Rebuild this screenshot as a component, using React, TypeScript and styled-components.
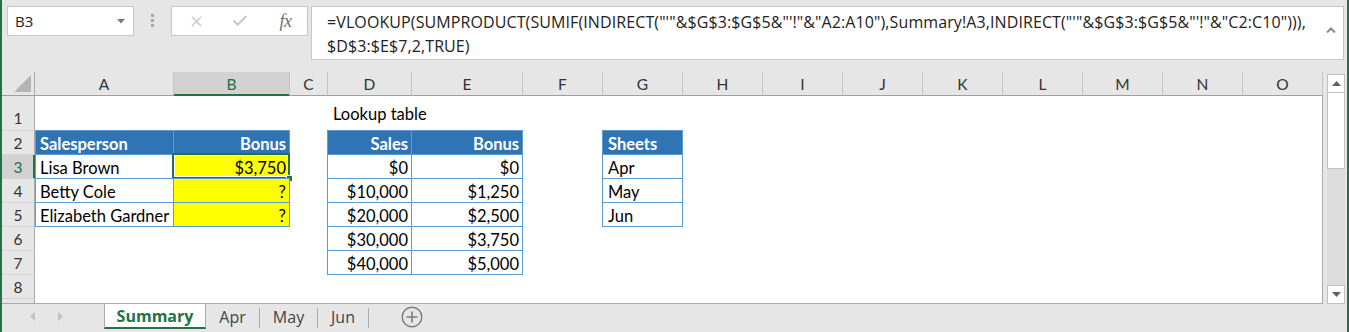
import styled, { createGlobalStyle, css } from "styled-components";
import { Check, X } from "lucide-react";

const GREEN = "#217346";
const BLUE_FILL = "#2f75b5";
const BLUE_LINE = "#5b9bd5";

const GlobalStyle = createGlobalStyle`
  html, body {
    margin: 0;
    padding: 0;
    background: #e6e6e6;
    overflow: hidden;
  }
`;

type Kind = "head" | "body" | "fill" | "plain";
type CellData = { text: string; kind: Kind; align?: "left" | "right"; selected?: boolean };
type RowData = { n: number; height: number; cells: Record<string, CellData> };

const COLUMNS = [
  { id: "A", width: 139 },
  { id: "B", width: 116 },
  { id: "C", width: 38 },
  { id: "D", width: 84 },
  { id: "E", width: 111 },
  { id: "F", width: 80 },
  ..."GHIJKLMNO".split("").map((id) => ({ id, width: 80 })),
];

const head = (text: string, align: "left" | "right" = "right"): CellData => ({ text, kind: "head", align });
const body = (text: string, align: "left" | "right" = "right"): CellData => ({ text, kind: "body", align });
const fill = (text: string, selected = false): CellData => ({ text, kind: "fill", align: "right", selected });

// row 9 only peeks out below row 8, so its number is not drawn
const ROWS: RowData[] = [
  { n: 1, height: 35, cells: { D: { text: "Lookup table", kind: "plain", align: "left" } } },
  {
    n: 2,
    height: 24,
    cells: { A: head("Salesperson", "left"), B: head("Bonus"), D: head("Sales"), E: head("Bonus"), G: head("Sheets", "left") },
  },
  {
    n: 3,
    height: 24,
    cells: { A: body("Lisa Brown", "left"), B: fill("$3,750", true), D: body("$0"), E: body("$0"), G: body("Apr", "left") },
  },
  {
    n: 4,
    height: 24,
    cells: { A: body("Betty Cole", "left"), B: fill("?"), D: body("$10,000"), E: body("$1,250"), G: body("May", "left") },
  },
  {
    n: 5,
    height: 24,
    cells: { A: body("Elizabeth Gardner", "left"), B: fill("?"), D: body("$20,000"), E: body("$2,500"), G: body("Jun", "left") },
  },
  { n: 6, height: 24, cells: { D: body("$30,000"), E: body("$3,750") } },
  { n: 7, height: 24, cells: { D: body("$40,000"), E: body("$5,000") } },
  { n: 8, height: 24, cells: {} },
  { n: 9, height: 24, cells: {} },
];

const FORMULA_LINE_1 =
  '=VLOOKUP(SUMPRODUCT(SUMIF(INDIRECT("\'"&$G$3:$G$5&"\'!"&"A2:A10"),Summary!A3,INDIRECT("\'"&$G$3:$G$5&"\'!"&"C2:C10"))),';
const FORMULA_LINE_2 = "$D$3:$E$7,2,TRUE)";

export default function App() {
  return (
    <>
      <GlobalStyle />
      <Window>
        <FormulaBar>
          <NameBox>
            <span>B3</span>
            <svg width="8" height="5" viewBox="0 0 8 5">
              <path d="M0 0 L8 0 L4 4.5 Z" fill="#7a7a7a" />
            </svg>
          </NameBox>
          <Grip>
            <Dot />
            <Dot />
            <Dot />
          </Grip>
          <ActionBox>
            <ActionSlot>
              <X size={17} color="#c4c4c4" strokeWidth={1.8} />
            </ActionSlot>
            <ActionSlot>
              <Check size={18} color="#c4c4c4" strokeWidth={2.4} />
            </ActionSlot>
            <ActionSlot>
              <Fx>fx</Fx>
            </ActionSlot>
          </ActionBox>
          <FormulaBox>
            <FormulaText>
              <div>{FORMULA_LINE_1}</div>
              <div>{FORMULA_LINE_2}</div>
            </FormulaText>
            <Collapse>
              <svg width="10" height="6" viewBox="0 0 10 6">
                <path d="M1 5.5 L5 1.5 L9 5.5" fill="none" stroke="#8a8a8a" strokeWidth="2" />
              </svg>
            </Collapse>
          </FormulaBox>
        </FormulaBar>

        <Main>
          <Sheet
            $columns={`33px ${COLUMNS.map((c) => `${c.width}px`).join(" ")}`}
            $rows={`24px ${ROWS.map((r) => `${r.height}px`).join(" ")}`}
          >
            <Corner>
              <svg width="17" height="17" viewBox="0 0 17 17">
                <path d="M17 0 L17 17 L0 17 Z" fill="#b4b4b4" />
              </svg>
            </Corner>
            {COLUMNS.map((c) => (
              <ColHeader key={c.id} $selected={c.id === "B"}>
                {c.id}
              </ColHeader>
            ))}
            {ROWS.map((row) => [
              <RowHeader key={`h${row.n}`} $selected={row.n === 3} $tall={row.height > 24}>
                {row.n < 9 ? row.n : ""}
              </RowHeader>,
              ...COLUMNS.map((c) => {
                const cell = row.cells[c.id];
                if (!cell) return <Cell key={`${c.id}${row.n}`} $kind="plain" />;
                return (
                  <Cell key={`${c.id}${row.n}`} $kind={cell.kind} $align={cell.align} $first={c.id === "A"}>
                    {cell.text}
                    {cell.selected && (
                      <Selection>
                        <Handle />
                      </Selection>
                    )}
                  </Cell>
                );
              }),
            ])}
          </Sheet>
          <ScrollBar>
            <ScrollButton>
              <svg width="9" height="5" viewBox="0 0 9 5">
                <path d="M0 5 L9 5 L4.5 0 Z" fill="#606060" />
              </svg>
            </ScrollButton>
            <Thumb />
            <Track />
            <ScrollButton>
              <svg width="9" height="5" viewBox="0 0 9 5">
                <path d="M0 0 L9 0 L4.5 5 Z" fill="#606060" />
              </svg>
            </ScrollButton>
          </ScrollBar>
        </Main>

        <TabBar>
          <NavArrows>
            <svg width="5" height="9" viewBox="0 0 5 9">
              <path d="M5 0 L5 9 L0 4.5 Z" fill="#c2c2c2" />
            </svg>
            <svg width="5" height="9" viewBox="0 0 5 9">
              <path d="M0 0 L0 9 L5 4.5 Z" fill="#c2c2c2" />
            </svg>
          </NavArrows>
          <Tab $active $width={102}>Summary</Tab>
          <Tab $width={53}>Apr</Tab>
          <TabDivider />
          <Tab $width={57}>May</Tab>
          <TabDivider />
          <Tab $width={50}>Jun</Tab>
          <TabDivider />
          <AddSheet>
            <svg width="22" height="22" viewBox="0 0 22 22">
              <circle cx="11" cy="11" r="9.8" fill="none" stroke="#7d7d7d" strokeWidth="1.4" />
              <path d="M11 5.5 V16.5 M5.5 11 H16.5" stroke="#7d7d7d" strokeWidth="1.6" />
            </svg>
          </AddSheet>
        </TabBar>
      </Window>
    </>
  );
}

const Window = styled.div`
  width: 1349px;
  height: 332px;
  box-sizing: border-box;
  border-left: 2px solid ${GREEN};
  border-right: 2px solid ${GREEN};
  background: #e6e6e6;
  display: flex;
  flex-direction: column;
  overflow: hidden;
`;

const FormulaBar = styled.div`
  height: 72px;
  flex: none;
  box-sizing: border-box;
  display: flex;
  align-items: flex-start;
  padding: 6px 3px 0 5px;
`;

const NameBox = styled.div`
  width: 127px;
  height: 30px;
  box-sizing: border-box;
  border: 1px solid #c6c6c6;
  background: #fff;
  display: flex;
  align-items: center;
  justify-content: space-between;
  padding: 0 8px 0 7px;
  font: 15px "Open Sans", sans-serif;
  color: #222;
`;

const Grip = styled.div`
  display: flex;
  flex-direction: column;
  gap: 2px;
  margin: 8px 17px 0 17px;
`;

const Dot = styled.div`
  width: 3px;
  height: 3px;
  background: #a8a8a8;
`;

const ActionBox = styled.div`
  width: 137px;
  height: 30px;
  box-sizing: border-box;
  border: 1px solid #c6c6c6;
  background: #fff;
  display: flex;
  align-items: center;
  padding-left: 2px;
`;

const ActionSlot = styled.div`
  width: 44px;
  display: flex;
  justify-content: center;
  align-items: center;
`;

const Fx = styled.span`
  font: italic 18px "Liberation Serif", serif;
  color: #6e6e6e;
  letter-spacing: -0.5px;
  margin-left: 3px;
`;

const FormulaBox = styled.div`
  flex: 1;
  height: 54px;
  margin-left: 3px;
  box-sizing: border-box;
  border: 1px solid #c6c6c6;
  background: #fff;
  display: flex;
  padding: 3px 7px 0 15px;
`;

const FormulaText = styled.div`
  flex: 1;
  font: 16px "Open Sans", sans-serif;
  letter-spacing: 0.1px;
  line-height: 24px;
  color: #222;
  white-space: nowrap;
  overflow: hidden;
`;

const Collapse = styled.div`
  margin-top: 9px;
`;

const Main = styled.div`
  display: flex;
  flex: none;
  height: 232px;
`;

const Sheet = styled.div<{ $columns: string; $rows: string }>`
  display: grid;
  grid-template-columns: ${({ $columns }) => $columns};
  grid-template-rows: ${({ $rows }) => $rows};
  width: 1321px;
  height: 232px;
  box-sizing: border-box;
  border-bottom: 1px solid #ababab;
  background: #fff;
  box-shadow: inset -1px 0 0 #ababab;
  overflow: hidden;
  font-family: Lato, "Open Sans", sans-serif;
`;

const headerBase = css`
  box-sizing: border-box;
  background: #e6e6e6;
  color: #333;
  font-size: 15.5px;
  display: flex;
  justify-content: center;
`;

const Corner = styled.div`
  ${headerBase};
  border-right: 1px solid #ababab;
  border-bottom: 1px solid #9f9f9f;
  align-items: flex-end;
  justify-content: flex-end;
  padding: 0 3px 3px 0;
`;

const ColHeader = styled.div<{ $selected?: boolean }>`
  ${headerBase};
  align-items: center;
  padding-top: 1px;
  border-right: 1px solid #c4c4c4;
  border-bottom: 1px solid #9f9f9f;
  ${({ $selected }) =>
    $selected &&
    css`
      background: #d2d2d2;
      color: ${GREEN};
      border-bottom-color: ${GREEN};
      box-shadow: inset 0 -1px 0 ${GREEN};
    `}
`;

const RowHeader = styled.div<{ $selected?: boolean; $tall?: boolean }>`
  ${headerBase};
  align-items: ${({ $tall }) => ($tall ? "flex-end" : "center")};
  padding-bottom: ${({ $tall }) => ($tall ? "3px" : "0")};
  border-right: 1px solid #ababab;
  border-bottom: 1px solid #d4d4d4;
  ${({ $selected }) =>
    $selected &&
    css`
      background: #d2d2d2;
      color: ${GREEN};
      border-right-color: ${GREEN};
      box-shadow: inset -1px 0 0 ${GREEN};
    `}
`;

const tableLines = (first?: boolean) =>
  first
    ? `inset 1px 0 0 ${BLUE_LINE}, inset -1px -1px 0 ${BLUE_LINE}, 0 -1px 0 ${BLUE_LINE}`
    : `inset -1px -1px 0 ${BLUE_LINE}, -1px -1px 0 ${BLUE_LINE}, 0 -1px 0 ${BLUE_LINE}, -1px 0 0 ${BLUE_LINE}`;

const Cell = styled.div<{ $kind: Kind; $align?: "left" | "right"; $first?: boolean }>`
  position: relative;
  box-sizing: border-box;
  display: flex;
  align-items: center;
  justify-content: ${({ $align }) => ($align === "right" ? "flex-end" : "flex-start")};
  padding: 1px 4px 0 5px;
  font-size: 16.5px;
  color: #000;
  white-space: nowrap;
  min-width: 0;
  ${({ $kind, $first }) =>
    $kind === "head" &&
    css`
      background: ${BLUE_FILL};
      color: #fff;
      font-weight: 700;
      box-shadow: ${tableLines($first)};
    `}
  ${({ $kind, $first }) =>
    $kind === "body" &&
    css`
      box-shadow: ${tableLines($first)};
    `}
  ${({ $kind, $first }) =>
    $kind === "fill" &&
    css`
      background: #ffff00;
      box-shadow: ${tableLines($first)};
    `}
`;

const Selection = styled.div`
  position: absolute;
  top: -2px;
  left: -2px;
  right: 0;
  bottom: 0;
  border: 2px solid ${GREEN};
  box-shadow: inset 0 0 0 1px #fff;
  pointer-events: none;
`;

const Handle = styled.div`
  position: absolute;
  right: -4px;
  bottom: -4px;
  width: 6px;
  height: 6px;
  box-sizing: border-box;
  background: ${GREEN};
  border-left: 1px solid #fff;
  border-top: 1px solid #fff;
`;

const ScrollBar = styled.div`
  width: 18px;
  margin: 2px 2px 0 4px;
  height: 230px;
  display: flex;
  flex-direction: column;
  background: #dcdcdc;
`;

const ScrollButton = styled.div`
  height: 19px;
  box-sizing: border-box;
  border: 1px solid #c2c2c2;
  background: #fff;
  display: flex;
  align-items: center;
  justify-content: center;
`;

const Thumb = styled.div`
  height: 76px;
  box-sizing: border-box;
  border: 1px solid #c2c2c2;
  border-top: none;
  background: #fff;
`;

const Track = styled.div`
  flex: 1;
`;

const TabBar = styled.div`
  flex: 1;
  display: flex;
  align-items: flex-start;
  font-family: "Open Sans", sans-serif;
`;

const NavArrows = styled.div`
  width: 102px;
  height: 25px;
  display: flex;
  align-items: center;
  gap: 23px;
  padding-left: 28px;
  box-sizing: border-box;
`;

const Tab = styled.div<{ $active?: boolean; $width: number }>`
  width: ${({ $width }) => $width}px;
  height: 25px;
  box-sizing: border-box;
  display: flex;
  align-items: center;
  justify-content: center;
  font-size: 16px;
  color: #444;
  ${({ $active }) =>
    $active &&
    css`
      background: #fff;
      border-left: 1px solid #ababab;
      border-right: 1px solid #ababab;
      border-bottom: 2px solid ${GREEN};
      color: ${GREEN};
      font-weight: 700;
    `}
`;

const TabDivider = styled.div`
  width: 1px;
  height: 20px;
  margin-top: 4px;
  background: #ababab;
`;

const AddSheet = styled.div`
  margin: 2px 0 0 32px;
  display: flex;
`;
